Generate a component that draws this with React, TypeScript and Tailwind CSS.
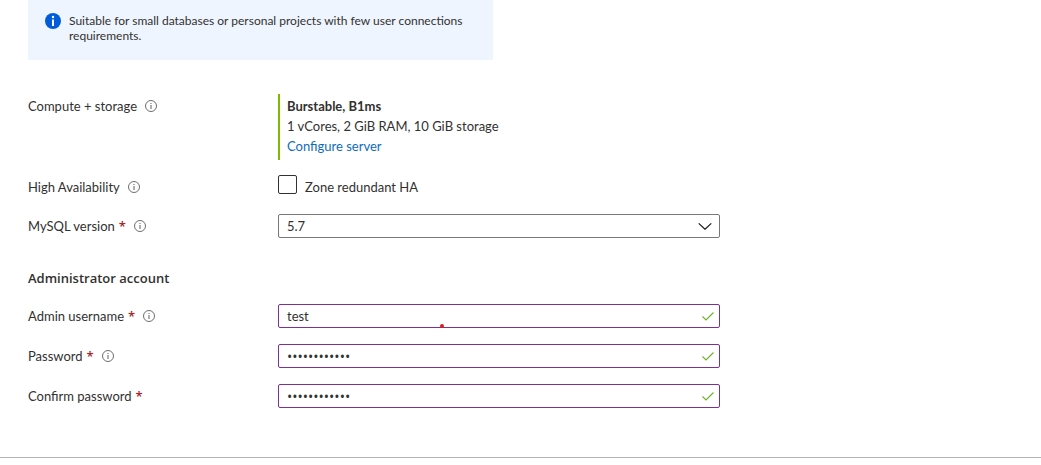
import React, { useState } from "react";

function InfoIcon() {
  return (
    <svg
      className="ml-2 h-3 w-3 shrink-0"
      viewBox="0 0 12 12"
      fill="none"
      aria-hidden="true"
    >
      <circle cx="6" cy="6" r="5.5" stroke="#605e5c" strokeWidth="0.9" />
      <path d="M6 5v4" stroke="#605e5c" strokeWidth="1" />
      <path d="M6 3v1" stroke="#605e5c" strokeWidth="1" />
    </svg>
  );
}

function CheckIcon() {
  return (
    <svg
      className="pointer-events-none absolute top-2 right-[6px] h-[9px] w-3"
      viewBox="0 0 12 9"
      fill="none"
      aria-hidden="true"
    >
      <path d="M0.5 4.5L4 8L11.5 0.5" stroke="#6bb02a" strokeWidth="1.1" />
    </svg>
  );
}

interface FieldLabelProps {
  text: string;
  htmlFor?: string;
  required?: boolean;
  info?: boolean;
}

function FieldLabel({ text, htmlFor, required, info }: FieldLabelProps) {
  return (
    <div className="flex h-6 w-[250px] shrink-0 items-center">
      <label htmlFor={htmlFor}>
        {text}
        {required && (
          <span className="ml-1 font-['Open_Sans',sans-serif] font-semibold text-[#a4262c]">
            *
          </span>
        )}
      </label>
      {info && <InfoIcon />}
    </div>
  );
}

interface TextFieldProps {
  id: string;
  label: string;
  type: string;
  initial: string;
  info?: boolean;
  marker?: boolean;
}

function TextField({ id, label, type, initial, info, marker }: TextFieldProps) {
  const [value, setValue] = useState(initial);

  return (
    <div className="flex">
      <FieldLabel text={label} htmlFor={id} required info={info} />
      <div className="relative min-w-0 flex-1">
        <input
          id={id}
          type={type}
          value={value}
          onChange={(e) => setValue(e.target.value)}
          className={
            type === "password"
              ? "block h-6 w-full rounded-[2px] border border-[#7b3294] bg-white pr-7 pl-2 font-['Open_Sans',sans-serif] text-sm outline-none"
              : "block h-6 w-full rounded-[2px] border border-[#7b3294] bg-white pr-7 pl-2 outline-none"
          }
        />
        <CheckIcon />
        {marker && (
          <span className="absolute bottom-0 left-[162px] h-1 w-1 rounded-full bg-[#d81e1e]" />
        )}
      </div>
    </div>
  );
}

export default function App() {
  const [zoneRedundant, setZoneRedundant] = useState(false);

  return (
    <main className="bg-white font-['Lato','Open_Sans',sans-serif] text-[13px] leading-5 text-[#323130]">
      <div className="max-w-[720px] pl-7">
        <div className="flex max-w-[465px] gap-2 bg-[#eff5ff] pt-[13px] pr-4 pb-[17px] pl-[17px]">
          <svg className="h-4 w-4 shrink-0" viewBox="0 0 16 16" aria-hidden="true">
            <circle cx="8" cy="8" r="8" fill="#015cda" />
            <path d="M7 6.5h2V13H7z" fill="#fff" />
            <circle cx="8" cy="4" r="1.2" fill="#fff" />
          </svg>
          <p className="text-xs leading-[15px]">
            Suitable for small databases or personal projects with few user
            connections requirements.
          </p>
        </div>

        <div className="mt-[34px] flex">
          <FieldLabel text="Compute + storage" info />
          <div className="border-l-2 border-[#7fba00] pt-[2px] pb-1 pl-[7px]">
            <p className="font-bold">Burstable, B1ms</p>
            <p>1 vCores, 2 GiB RAM, 10 GiB storage</p>
            <a href="#configure" className="block text-[#0f6cbd]">
              Configure server
            </a>
          </div>
        </div>

        <div className="mt-[15px] flex">
          <FieldLabel text="High Availability" info />
          <div className="flex h-6 gap-2">
            <input
              id="zone-redundant"
              type="checkbox"
              checked={zoneRedundant}
              onChange={(e) => setZoneRedundant(e.target.checked)}
              className="h-[19px] w-[19px] appearance-none rounded-[2px] border border-[#323130] bg-white checked:bg-[#015cda]"
            />
            <label htmlFor="zone-redundant" className="leading-6">
              Zone redundant HA
            </label>
          </div>
        </div>

        <div className="mt-[15px] flex">
          <FieldLabel text="MySQL version" htmlFor="version" required info />
          <div className="relative min-w-0 flex-1">
            <select
              id="version"
              defaultValue="5.7"
              className="block h-6 w-full appearance-none rounded-[2px] border border-[#7a7876] bg-white pr-7 pl-2 outline-none"
            >
              <option value="5.7">5.7</option>
              <option value="8.0">8.0</option>
            </select>
            <svg
              className="pointer-events-none absolute top-[9px] right-2 h-[7px] w-[14px]"
              viewBox="0 0 14 7"
              fill="none"
              aria-hidden="true"
            >
              <path d="M0.7 0.4L7 6.3L13.3 0.4" stroke="#201f1e" strokeWidth="1.2" />
            </svg>
          </div>
        </div>

        <h2 className="mt-[30px] mb-4 font-['Open_Sans',sans-serif] font-semibold">
          Administrator account
        </h2>

        <div className="flex flex-col gap-4">
          <TextField
            id="username"
            label="Admin username"
            type="text"
            initial="test"
            info
            marker
          />
          <TextField
            id="password"
            label="Password"
            type="password"
            initial="mysqladmin57"
            info
          />
          <TextField
            id="confirm"
            label="Confirm password"
            type="password"
            initial="mysqladmin57"
          />
        </div>
      </div>

      <hr className="mt-[49px] border-t border-[#b3b3b3]" />
    </main>
  );
}
